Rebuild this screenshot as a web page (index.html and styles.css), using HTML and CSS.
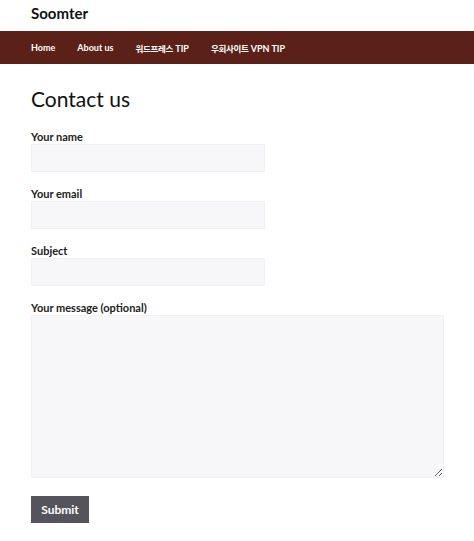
FILE: index.html
```html
<!DOCTYPE html>
<html lang="ko">
<head>
  <meta charset="UTF-8">
  <meta name="viewport" content="width=device-width, initial-scale=1.0">
  <title>Contact us - Soomter</title>
  <link rel="stylesheet" href="styles.css">
</head>
<body>
  <header class="site-header">
    <div class="site-title">Soomter</div>
  </header>

  <nav class="main-nav">
    <a href="#">Home</a>
    <a href="#">About us</a>
    <a href="#"><span class="ko">워드프레스</span> TIP</a>
    <a href="#"><span class="ko">우회사이트</span> VPN TIP</a>
  </nav>

  <main class="content">
    <h1>Contact us</h1>
    <form class="contact-form">
      <div class="form-group">
        <label for="your-name">Your name</label>
        <input type="text" id="your-name">
      </div>
      <div class="form-group">
        <label for="your-email">Your email</label>
        <input type="email" id="your-email">
      </div>
      <div class="form-group">
        <label for="your-subject">Subject</label>
        <input type="text" id="your-subject">
      </div>
      <div class="form-group">
        <label for="your-message">Your message (optional)</label>
        <textarea id="your-message"></textarea>
      </div>
      <button type="submit" class="submit-btn">Submit</button>
    </form>
  </main>
</body>
</html>
```

FILE: styles.css
```css
:root {
  --nav-bg: #5b2118;
  --text-color: #222;
  --field-bg: #f7f7f9;
  --button-bg: #55545c;
}

* {
  margin: 0;
  padding: 0;
  box-sizing: border-box;
}

body {
  font-family: 'Lato', 'Noto Sans CJK KR', sans-serif;
  color: var(--text-color);
  background: #fff;
}

.site-header {
  height: 31px;
  padding: 3px 31px 0;
}

.site-title {
  font-size: 15px;
  line-height: 20px;
  font-weight: 700;
  color: #111;
}

.main-nav {
  height: 33px;
  background: var(--nav-bg);
  padding: 0 31px;
  display: flex;
  align-items: center;
  gap: 22px;
}

.main-nav a {
  color: #fff;
  text-decoration: none;
  font-size: 9px;
  font-weight: 700;
}

.main-nav .ko {
  font-size: 8.5px;
  letter-spacing: -0.3px;
}

.content {
  padding: 22px 31px 0;
}

h1 {
  font-size: 21px;
  font-weight: 400;
  color: #111;
  line-height: 26px;
  margin-bottom: 18px;
}

.form-group {
  margin-bottom: 15px;
}

label {
  display: block;
  font-size: 11px;
  font-weight: 700;
  line-height: 14px;
  color: #222;
}

input,
textarea {
  display: block;
  background: var(--field-bg);
  border: 1px solid #f1f1f4;
  font-family: inherit;
  font-size: 12px;
}

input {
  width: 234px;
  height: 28px;
}

textarea {
  width: 413px;
  height: 163px;
}

.form-group:last-of-type {
  margin-bottom: 18px;
}

.submit-btn {
  background: var(--button-bg);
  color: #fff;
  border: none;
  font-family: inherit;
  font-size: 12px;
  font-weight: 700;
  width: 58px;
  height: 27px;
  cursor: pointer;
}
```
